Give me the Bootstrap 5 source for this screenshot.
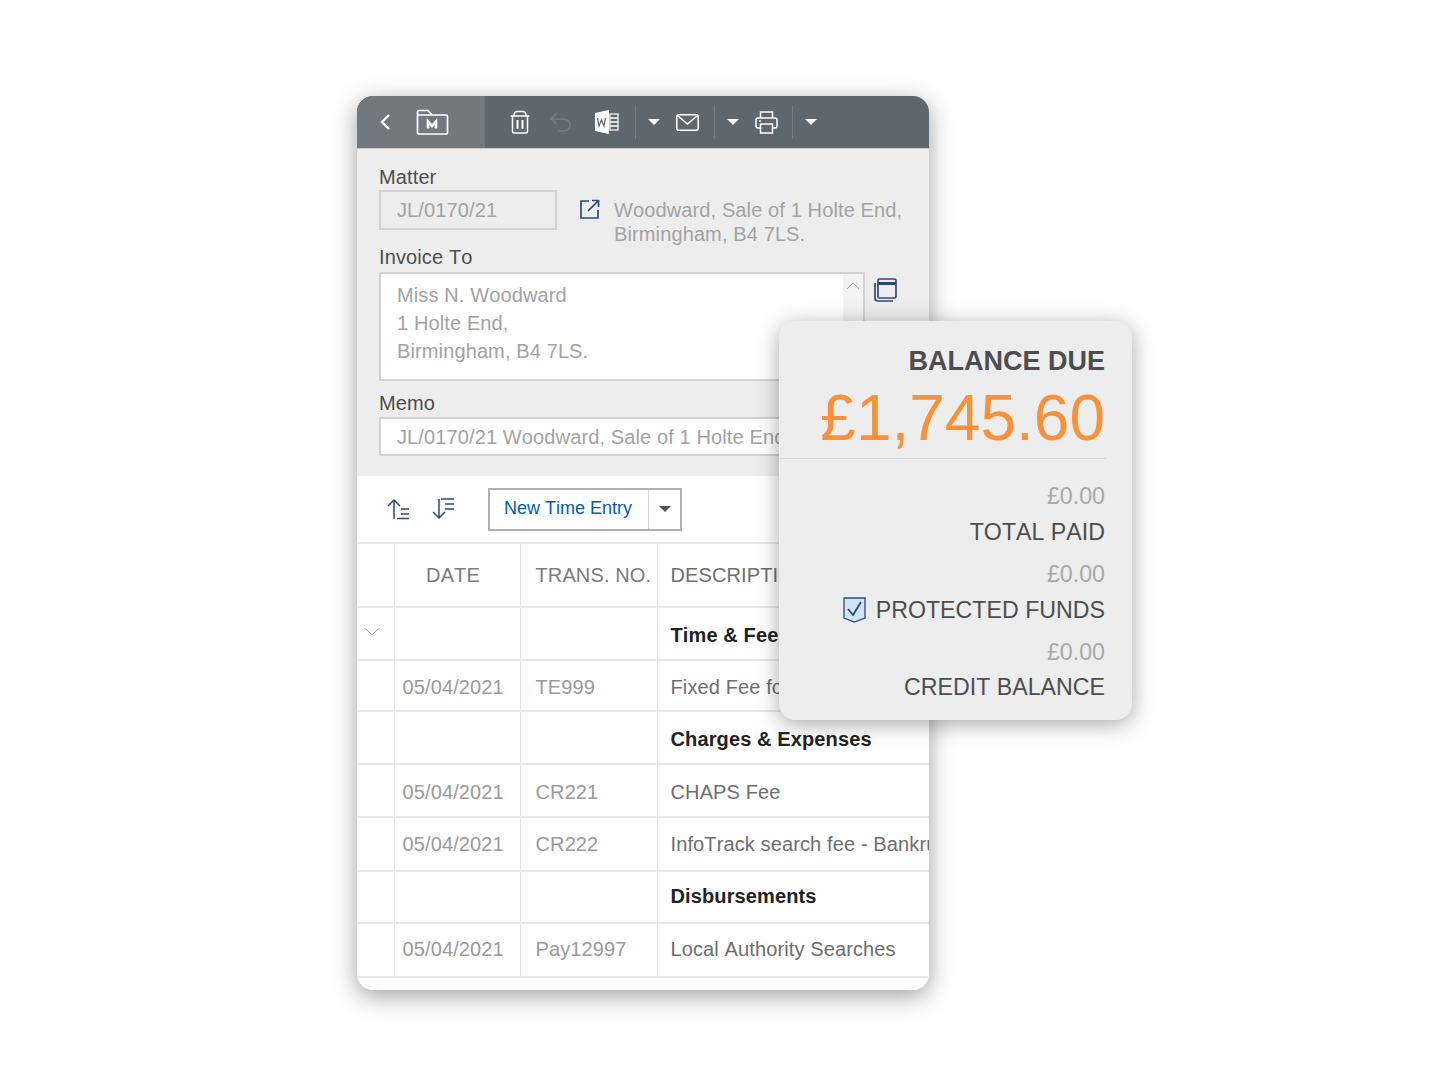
<!DOCTYPE html>
<html lang="en">
<head>
<meta charset="UTF-8">
<title>Invoice</title>
<link rel="stylesheet" href="https://cdn.jsdelivr.net/npm/bootstrap@5.3.0/dist/css/bootstrap.min.css">
<style>
    body {
        background: #fff;
        font-family: "Liberation Sans", Arial, sans-serif;
        font-size: 20px;
        font-kerning: none;
        color: #4d4d4d;
        height: 1080px;
        overflow: hidden;
    }
    .stage { padding: 96px 0 0 357px; }
    .win {
        position: relative;
        width: 572px;
        height: 894px;
        background: #fff;
        border-radius: 16px;
        box-shadow: 0 6px 24px rgba(0,0,0,.38);
    }
    .tbar {
        height: 53px;
        background: #5f676e;
        border-bottom: 1px solid #c9ccce;
        border-radius: 16px 16px 0 0;
        overflow: hidden;
    }
    .tbar-left { width: 128px; height: 100%; background: #71797f; padding-left: 22px; gap: 19px; }
    .tbar-sep { width: 1px; height: 34px; background: #767d83; }
    .caret-w { width: 0; height: 0; border-left: 6px solid transparent; border-right: 6px solid transparent; border-top: 6px solid #fff; }
    .form-zone { height: 327px; background: #ededed; padding: 16px 0 0 22px; letter-spacing: .12px; }
    .lbl { line-height: 24px; }
    .lbl-top { margin-bottom: 1px; }
    .lbl-inv { margin-top: -1px; margin-bottom: 3px; }
    .lbl-memo { margin-top: 10px; }
    .box-in {
        width: 178px; height: 40px;
        border: 2px solid #d2d2d2;
        color: #a3a3a3;
        padding-left: 16px;
        line-height: 37px;
    }
    .matter-name { color: #a3a3a3; line-height: 24px; width: 300px; margin: 8px 0 0 14px; }
    .addr {
        width: 486px; height: 109px;
        border: 2px solid #d2d2d2;
        background: #fff;
        color: #a3a3a3;
        padding: 7px 0 0 16px;
        line-height: 28px;
    }
    .addr-scroll { top: 0; right: 0; width: 20px; height: 100%; background: #f3f3f3; }
    .memo-in { width: 486px; height: 39px; margin-top: 2px; border: 2px solid #d2d2d2; background: #fff; color: #a3a3a3; padding-left: 16px; line-height: 36px; white-space: nowrap; overflow: hidden; }
    .act-zone { height: 66px; padding-left: 30px; }
    .split-btn { width: 194px; height: 43px; border: 2px solid #b1b1b1; margin-left: 33px; font-size: 18px; color: #0060a8; }
    .split-main { width: 159px; padding-right: 2px; text-align: center; border-right: 1px solid #d8d8d8; line-height: 37px; height: 100%; }
    .caret-g { width: 0; height: 0; border-left: 6px solid transparent; border-right: 6px solid transparent; border-top: 6px solid #555; }
    .grid-wrap { height: 448px; overflow: hidden; border-radius: 0 0 16px 16px; }
    .tbl { table-layout: fixed; width: 572px; margin: 0; border-collapse: collapse; white-space: nowrap; letter-spacing: .12px; }
    .tbl td, .tbl th {
        padding: 0 0 0 8px;
        border: 0;
        border-top: 2px solid #e8e8e8;
        border-right: 1px solid #e4e4e4;
        vertical-align: middle;
        font-weight: 400;
        color: #9a9a9a;
        overflow: visible;
    }
    .tbl th { color: #7b7b7b; }
    .tbl td:nth-child(3), .tbl th:nth-child(3) { padding-left: 15px; }
    .tbl td:last-child, .tbl th:last-child { border-right: 0; padding-left: 13px; color: #6e6e6e; overflow: hidden; }
    .tbl td.grp { font-weight: 700; color: #222; }
    .tbl tr.end td { border-bottom: 2px solid #e8e8e8; }
    .tbl th.hd-date { text-align: center; padding-right: 16px; }
    .tbl tr.tx-dn td { padding-top: 2px; }
    .tbl tr.tx-up td { padding-bottom: 2px; }
    .chev { display: block; margin-top: -5px; }
    .bal {
        position: absolute;
        left: 422px; top: 225px;
        width: 353px; height: 399px;
        background: #ededed;
        border-radius: 16px;
        box-shadow: 0 4px 22px rgba(0,0,0,.35);
        text-align: right;
        padding: 22px 27px 0 0;
        font-size: 23.2px;
    }
    .bal-head { font-weight: 700; font-size: 27px; line-height: 36px; color: #4d4d4d; }
    .bal-amt { font-size: 64px; line-height: 77px; padding-top: 1px; color: #f9913a; }
    .bal-rule { border-top: 1px solid #d9d9d9; margin-top: 1px; width: 327px; margin-right: -1px; }
    .bal-val { color: #a9a9a9; line-height: 36px; }
    .bal-first { margin-top: 19px; }
    .bal-name { line-height: 36px; margin-bottom: 6px; color: #4d4d4d; }
    .bal-last { margin-top: -1px; }
    .gap-shield { gap: 10px; }
</style>
</head>
<body>
<div class="stage">
    <div class="win">
        <div class="tbar d-flex align-items-center">
            <div class="tbar-left d-flex align-items-center">
                <svg width="14" height="18" viewBox="0 0 14 18" fill="none" stroke="#fff" stroke-width="2.4"><path d="M10 2 3 9l7 7"/></svg>
                <svg width="33" height="26" viewBox="0 0 33 26" fill="none" stroke="#fff" stroke-width="1.7" class="ms-1"><path d="M1.500 24V3a1.500 1.500 0 0 1 1.500-1.500h9l4 4.500H30a1.500 1.500 0 0 1 1.500 1.500v16a1.500 1.500 0 0 1-1.500 1.500H3a1.500 1.500 0 0 1-1.500-1.500ZM1.500 6h14"/><path d="M12 19.500v-7l4 4.500 4-4.500v7" stroke-width="2.600"/></svg>
            </div>
            <svg style="margin-left:25px" width="20" height="24" viewBox="0 0 20 24" fill="none" stroke="#fff" stroke-width="1.500"><path d="M2.500 6.500V21a2 2 0 0 0 2 2h11a2 2 0 0 0 2-2V6.500M.5 6h19M4 6c0-3 1-4.500 3-4.500h6c2 0 3 1.500 3 4.500"/><path d="M7.500 10v9M12.500 10v9" stroke-width="2"/></svg>
            <svg style="margin-left:20px" width="22" height="20" viewBox="0 0 22 20" fill="none" stroke="#767d83" stroke-width="1.500"><path d="M7 1 1 7l6 5M1 7h13a6 6 0 0 1 0 12H8"/></svg>
            <svg style="margin-left:23px" width="24" height="24" viewBox="0 0 24 24"><path d="M0 3 14 0v24L0 21Z" fill="#fff"/><rect x="15" y="4" width="8" height="16" fill="none" stroke="#fff" stroke-width="1.200"/><path d="M15 8h8M15 12h8M15 16h8" stroke="#fff" stroke-width="1.500"/><path d="M2.500 8l1.500 8 2.500-6 2.500 6 1.500-8" fill="none" stroke="#5f676e" stroke-width="1.300"/></svg>
            <div class="tbar-sep" style="margin-left:16px"></div>
            <div class="caret-w" style="margin-left:12px"></div>
            <svg style="margin-left:16px" width="23" height="17" viewBox="0 0 23 17" fill="none" stroke="#fff" stroke-width="1.500"><rect x=".8" y=".8" width="21.400" height="15.400" rx="2"/><path d="m2 2 9.500 8L21 2"/></svg>
            <div class="tbar-sep" style="margin-left:15px"></div>
            <div class="caret-w" style="margin-left:12px"></div>
            <svg style="margin-left:16px" width="23" height="23" viewBox="0 0 23 23" fill="none" stroke="#fff" stroke-width="1.500"><path d="M5.500 7V1h12v6M5.500 17H3a2 2 0 0 1-2-2V9a2 2 0 0 1 2-2h17a2 2 0 0 1 2 2v6a2 2 0 0 1-2 2h-2.500"/><rect x="5.500" y="13" width="12" height="9"/><path d="M4 10h2"/></svg>
            <div class="tbar-sep" style="margin-left:14px"></div>
            <div class="caret-w" style="margin-left:12px"></div>
        </div>

        <div class="form-zone">
            <div class="lbl lbl-top">Matter</div>
            <div class="d-flex">
                <div class="box-in">JL/0170/21</div>
                <svg style="margin:9px 0 0 23px" width="20" height="20" viewBox="0 0 20 20" fill="none" stroke="#2a4a7a" stroke-width="1.700"><path d="M9 2H1v17h17v-8M8 12 18 2M12 1.500h6.500V8"/></svg>
                <div class="matter-name">Woodward, Sale of 1 Holte End, Birmingham, B4 7LS.</div>
            </div>
            <div class="lbl lbl-inv">Invoice To</div>
            <div class="d-flex">
                <div class="addr position-relative">
                    Miss N. Woodward<br>1 Holte End,<br>Birmingham, B4 7LS.
                    <div class="addr-scroll position-absolute d-flex justify-content-center">
                        <svg class="mt-2" width="14" height="8" viewBox="0 0 14 8" fill="none" stroke="#a8a8a8" stroke-width="1"><path d="m1 7 6-6 6 6"/></svg>
                    </div>
                </div>
                <svg style="margin:6px 0 0 9px" width="23" height="24" viewBox="0 0 23 24" fill="none" stroke="#2a4a7a" stroke-width="1.700"><path d="M1 5v15a3 3 0 0 0 3 3h15"/><rect x="4" y="1" width="18" height="19" rx="1.500"/><path d="M4 5.500h18" stroke-width="3"/></svg>
            </div>
            <div class="lbl lbl-memo">Memo</div>
            <div class="memo-in">JL/0170/21 Woodward, Sale of 1 Holte End, Birmingham</div>
        </div>

        <div class="act-zone d-flex align-items-center">
            <svg width="23" height="22" viewBox="0 0 23 22" fill="none" stroke="#2a4a7a" stroke-width="1.500"><path d="M7 21V2M1 8l6-6 6 6M14 11h8M14 16h8M10 20.500h12"/></svg>
            <svg style="margin-left:22px" width="23" height="22" viewBox="0 0 23 22" fill="none" stroke="#2a4a7a" stroke-width="1.500"><path d="M7 1v19M1 14l6 6 6-6M9 1h13M13 6h9M13 11h9"/></svg>
            <div class="split-btn d-flex align-items-center">
                <div class="split-main">New Time Entry</div>
                <div class="caret-g" style="margin-left:10px"></div>
            </div>
        </div>

        <div class="grid-wrap">
            <table class="tbl">
                <colgroup><col style="width:37px"><col style="width:126px"><col style="width:137px"><col></colgroup>
                <tr style="height:64px"><th></th><th class="hd-date">DATE</th><th>TRANS. NO.</th><th>DESCRIPTION</th></tr>
                <tr class="tx-dn" style="height:53px"><td><svg class="chev" width="14" height="8" viewBox="0 0 14 8" fill="none" stroke="#a8a8a8" stroke-width="1"><path d="m1 1 6 6 6-6"/></svg></td><td></td><td></td><td class="grp">Time &amp; Fees</td></tr>
                <tr class="tx-dn" style="height:51px"><td></td><td>05/04/2021</td><td>TE999</td><td>Fixed Fee for Sale</td></tr>
                <tr class="tx-dn" style="height:53px"><td></td><td></td><td></td><td class="grp">Charges &amp; Expenses</td></tr>
                <tr class="tx-dn" style="height:53px"><td></td><td>05/04/2021</td><td>CR221</td><td>CHAPS Fee</td></tr>
                <tr style="height:54px"><td></td><td>05/04/2021</td><td>CR222</td><td>InfoTrack search fee - Bankruptcy</td></tr>
                <tr class="tx-up" style="height:52px"><td></td><td></td><td></td><td class="grp">Disbursements</td></tr>
                <tr class="end tx-up" style="height:54px"><td></td><td>05/04/2021</td><td>Pay12997</td><td>Local Authority Searches</td></tr>
            </table>
        </div>

        <div class="bal">
            <div class="bal-head">BALANCE DUE</div>
            <div class="bal-amt">£1,745.60</div>
            <div class="bal-rule ms-auto"></div>
            <div class="bal-val bal-first">£0.00</div>
            <div class="bal-name">TOTAL PAID</div>
            <div class="bal-val">£0.00</div>
            <div class="bal-name d-flex justify-content-end align-items-center gap-shield">
                <svg width="23" height="26" viewBox="0 0 23 26"><path d="M1 1h21v20l-10.500 4L1 21Z" fill="#cfe4f7" stroke="#2a4a7a" stroke-width="1.300"/><path d="m5 12 5 6 8-13" fill="none" stroke="#2a4a7a" stroke-width="1.800"/></svg>
                <span>PROTECTED FUNDS</span>
            </div>
            <div class="bal-val">£0.00</div>
            <div class="bal-name bal-last">CREDIT BALANCE</div>
        </div>
    </div>
</div>
<script src="https://cdn.jsdelivr.net/npm/bootstrap@5.3.0/dist/js/bootstrap.bundle.min.js"></script>
</body>
</html>
